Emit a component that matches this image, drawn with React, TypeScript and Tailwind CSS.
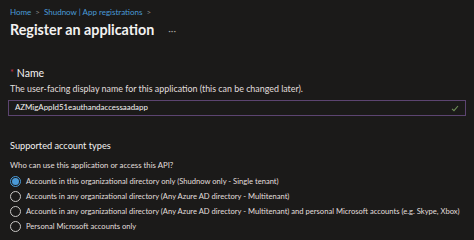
import React from 'react';

const options = [
  'Accounts in this organizational directory only (Shudnow only - Single tenant)',
  'Accounts in any organizational directory (Any Azure AD directory - Multitenant)',
  'Accounts in any organizational directory (Any Azure AD directory - Multitenant) and personal Microsoft accounts (e.g. Skype, Xbox)',
  'Personal Microsoft accounts only',
];

export default function App() {
  return (
    <div
      className="w-[474px] h-[240px] overflow-hidden bg-[#1b1a19] text-[#f3f2f1] px-[10px]"
      style={{ fontFamily: 'Lato, "Noto Sans", sans-serif' }}
    >
      <div className="pt-[5px] flex items-center gap-[4px] text-[8px] text-[#4a9ad8] leading-[14px]">
        <span>Home</span>
        <span className="text-[#8a8886]">&gt;</span>
        <span>Shudnow | App registrations</span>
        <span className="text-[#8a8886]">&gt;</span>
      </div>
      <div className="flex items-center h-[22px]">
        <h1 className="text-[14.3px] font-bold leading-[22px]">Register an application</h1>
        <span className="ml-[14px] text-[10px] text-[#a19f9d] leading-none">···</span>
      </div>

      <div className="mt-[24px] flex items-center h-[16px]">
        <span className="text-[#c4314b] text-[9px] mr-[3px]">*</span>
        <span className="text-[10.5px] leading-[16px]">Name</span>
      </div>
      <div className="mt-[2px] text-[8.9px] leading-[12px] text-[#e1dfdd]">
        The user-facing display name for this application (this can be changed later).
      </div>
      <div className="mt-[5px] -mx-[2px] h-[16px] border border-[#5c4470] flex items-center justify-between px-[6px] text-[7.9px]">
        <span>AZMigAppId51eauthandaccessaadapp</span>
        <svg width="8" height="7" viewBox="0 0 8 7">
          <path d="M1 3.8 L3 5.6 L7 1" stroke="#6f8f57" strokeWidth="1.1" fill="none" />
        </svg>
      </div>

      <div className="mt-[22px] text-[9.2px] leading-[16px]">Supported account types</div>
      <div className="mt-[5px] text-[7.8px] leading-[12px] text-[#e1dfdd]">
        Who can use this application or access this API?
      </div>
      <div className="mt-[3px] flex flex-col">
        {options.map((o, i) => (
          <div key={i} className="flex items-center h-[15px] text-[7.6px] text-[#e1dfdd]">
            {i === 0 ? (
              <span className="w-[11px] h-[11px] rounded-full border border-[#4a9ad8] flex items-center justify-center shrink-0">
                <span className="w-[7px] h-[7px] rounded-full bg-[#4a9ad8]" />
              </span>
            ) : (
              <span className="w-[11px] h-[11px] rounded-full border border-[#c8c6c4] shrink-0" />
            )}
            <span className="ml-[5px] whitespace-nowrap">{o}</span>
          </div>
        ))}
      </div>
    </div>
  );
}
